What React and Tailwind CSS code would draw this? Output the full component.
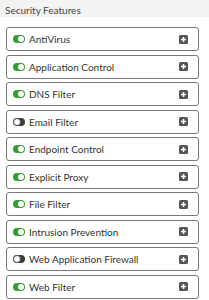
import React from "react";

const items = [
  ["AntiVirus", true],
  ["Application Control", true],
  ["DNS Filter", true],
  ["Email Filter", false],
  ["Endpoint Control", true],
  ["Explicit Proxy", true],
  ["File Filter", true],
  ["Intrusion Prevention", true],
  ["Web Application Firewall", false],
  ["Web Filter", true],
];

function Toggle({ on }) {
  return on ? (
    <div className="w-[12px] h-[8px] rounded-full bg-[#3a9a3a] flex items-center justify-end pr-[1px]">
      <div className="w-[6px] h-[6px] rounded-full bg-white" />
    </div>
  ) : (
    <div className="w-[12px] h-[8px] rounded-full bg-[#3c3c3c] flex items-center justify-start">
      <div className="w-[8px] h-[8px] rounded-full bg-white border border-[#555]" />
    </div>
  );
}

function Plus() {
  return (
    <svg width="9" height="9" viewBox="0 0 9 9">
      <rect x="0" y="0" width="9" height="9" rx="1.5" fill="#555" />
      <rect x="2" y="3.75" width="5" height="1.5" fill="#fff" />
      <rect x="3.75" y="2" width="1.5" height="5" fill="#fff" />
    </svg>
  );
}

export default function App() {
  return (
    <div className="w-[209px] h-[300px] bg-white font-['Lato',sans-serif] overflow-hidden">
      <div className="h-[17px] bg-[#f3f3f3] pl-[5px] pt-[4px] text-[10px] leading-[12px] text-[#444]">
        Security Features
      </div>
      <div className="flex flex-col gap-[3.5px] pl-[6px] pr-[10px] pt-[10px]">
        {items.map(([name, on]) => (
          <div
            key={name}
            className="h-[24px] border border-[#777] rounded-[3px] flex items-center pl-[6px] pr-[10px]"
          >
            <Toggle on={on} />
            <span className="ml-[4px] text-[10px] text-[#333] flex-1 leading-none">{name}</span>
            <Plus />
          </div>
        ))}
      </div>
    </div>
  );
}
